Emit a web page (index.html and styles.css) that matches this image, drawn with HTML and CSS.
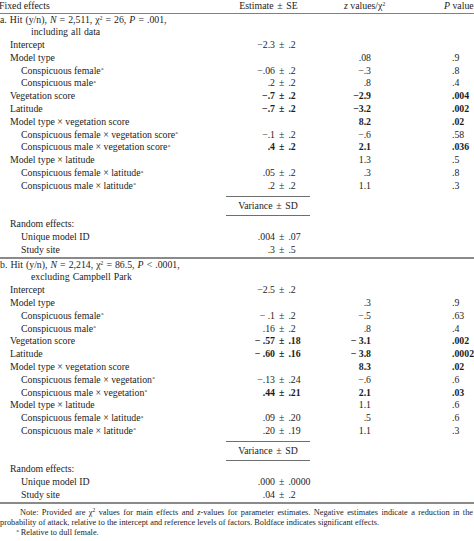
FILE: index.html
```html
<!DOCTYPE html>
<html>
<head>
<meta charset="utf-8">
<link rel="stylesheet" href="styles.css">
</head>
<body>
<div class="page">
  <div class="row head">
    <div class="lab first">Fixed effects</div>
    <div class="hest">Estimate ± SE</div>
    <div class="hz"><i>z</i> values/χ<sup class="sq">2</sup></div>
    <div class="hp"><i>P</i> value</div>
  </div>

  <section class="sec">
    <div class="row title"><div class="lab hang">a. Hit (y/n), <i>N</i> = 2,511, χ<sup class="sq">2</sup> = 26, <i>P</i> = .001,<br>including all data</div></div>
    <div class="row"><div class="lab l1">Intercept</div><div class="est"><span class="ev">−2.3</span><span class="pm">±</span><span class="se">.2</span></div><div class="z"></div><div class="p"></div></div>
    <div class="row"><div class="lab l1">Model type</div><div class="est"></div><div class="z">.08</div><div class="p">.9</div></div>
    <div class="row"><div class="lab l2">Conspicuous female<sup class="fa">a</sup></div><div class="est"><span class="ev">−.06</span><span class="pm">±</span><span class="se">.2</span></div><div class="z">−.3</div><div class="p">.8</div></div>
    <div class="row"><div class="lab l2">Conspicuous male<sup class="fa">a</sup></div><div class="est"><span class="ev">.2</span><span class="pm">±</span><span class="se">.2</span></div><div class="z">.8</div><div class="p">.4</div></div>
    <div class="row"><div class="lab l1">Vegetation score</div><div class="est b"><span class="ev">−.7</span><span class="pm">±</span><span class="se">.2</span></div><div class="z b">−2.9</div><div class="p b">.004</div></div>
    <div class="row"><div class="lab l1">Latitude</div><div class="est b"><span class="ev">−.7</span><span class="pm">±</span><span class="se">.2</span></div><div class="z b">−3.2</div><div class="p b">.002</div></div>
    <div class="row"><div class="lab l1">Model type × vegetation score</div><div class="est"></div><div class="z b">8.2</div><div class="p b">.02</div></div>
    <div class="row"><div class="lab l2">Conspicuous female × vegetation score<sup class="fa">a</sup></div><div class="est"><span class="ev">−.1</span><span class="pm">±</span><span class="se">.2</span></div><div class="z">−.6</div><div class="p">.58</div></div>
    <div class="row"><div class="lab l2">Conspicuous male × vegetation score<sup class="fa">a</sup></div><div class="est b"><span class="ev">.4</span><span class="pm">±</span><span class="se">.2</span></div><div class="z b">2.1</div><div class="p b">.036</div></div>
    <div class="row"><div class="lab l1">Model type × latitude</div><div class="est"></div><div class="z">1.3</div><div class="p">.5</div></div>
    <div class="row"><div class="lab l2">Conspicuous female × latitude<sup class="fa">a</sup></div><div class="est"><span class="ev">.05</span><span class="pm">±</span><span class="se">.2</span></div><div class="z">.3</div><div class="p">.8</div></div>
    <div class="row"><div class="lab l2">Conspicuous male × latitude<sup class="fa">a</sup></div><div class="est"><span class="ev">.2</span><span class="pm">±</span><span class="se">.2</span></div><div class="z">1.1</div><div class="p">.3</div></div>
    <div class="row var"><div class="lab"></div><div class="vcell">Variance ± SD</div></div>
    <div class="row"><div class="lab l1">Random effects:</div></div>
    <div class="row"><div class="lab l2">Unique model ID</div><div class="est"><span class="ev">.004</span><span class="pm">±</span><span class="se">.07</span></div></div>
    <div class="row"><div class="lab l2">Study site</div><div class="est"><span class="ev">.3</span><span class="pm">±</span><span class="se">.5</span></div></div>
  </section>

  <section class="sec">
    <div class="row title"><div class="lab hang">b. Hit (y/n), <i>N</i> = 2,214, χ<sup class="sq">2</sup> = 86.5, <i>P</i> &lt; .0001,<br>excluding Campbell Park</div></div>
    <div class="row"><div class="lab l1">Intercept</div><div class="est"><span class="ev">−2.5</span><span class="pm">±</span><span class="se">.2</span></div><div class="z"></div><div class="p"></div></div>
    <div class="row"><div class="lab l1">Model type</div><div class="est"></div><div class="z">.3</div><div class="p">.9</div></div>
    <div class="row"><div class="lab l2">Conspicuous female<sup class="fa">a</sup></div><div class="est"><span class="ev">− .1</span><span class="pm">±</span><span class="se">.2</span></div><div class="z">−.5</div><div class="p">.63</div></div>
    <div class="row"><div class="lab l2">Conspicuous male<sup class="fa">a</sup></div><div class="est"><span class="ev">.16</span><span class="pm">±</span><span class="se">.2</span></div><div class="z">.8</div><div class="p">.4</div></div>
    <div class="row"><div class="lab l1">Vegetation score</div><div class="est b"><span class="ev">− .57</span><span class="pm">±</span><span class="se">.18</span></div><div class="z b">− 3.1</div><div class="p b">.002</div></div>
    <div class="row"><div class="lab l1">Latitude</div><div class="est b"><span class="ev">− .60</span><span class="pm">±</span><span class="se">.16</span></div><div class="z b">− 3.8</div><div class="p b">.0002</div></div>
    <div class="row"><div class="lab l1">Model type × vegetation score</div><div class="est"></div><div class="z b">8.3</div><div class="p b">.02</div></div>
    <div class="row"><div class="lab l2">Conspicuous female × vegetation<sup class="fa">a</sup></div><div class="est"><span class="ev">−.13</span><span class="pm">±</span><span class="se">.24</span></div><div class="z">−.6</div><div class="p">.6</div></div>
    <div class="row"><div class="lab l2">Conspicuous male × vegetation<sup class="fa">a</sup></div><div class="est b"><span class="ev">.44</span><span class="pm">±</span><span class="se">.21</span></div><div class="z b">2.1</div><div class="p b">.03</div></div>
    <div class="row"><div class="lab l1">Model type × latitude</div><div class="est"></div><div class="z">1.1</div><div class="p">.6</div></div>
    <div class="row"><div class="lab l2">Conspicuous female × latitude<sup class="fa">a</sup></div><div class="est"><span class="ev">.09</span><span class="pm">±</span><span class="se">.20</span></div><div class="z">.5</div><div class="p">.6</div></div>
    <div class="row"><div class="lab l2">Conspicuous male × latitude<sup class="fa">a</sup></div><div class="est"><span class="ev">.20</span><span class="pm">±</span><span class="se">.19</span></div><div class="z">1.1</div><div class="p">.3</div></div>
    <div class="row var"><div class="lab"></div><div class="vcell">Variance ± SD</div></div>
    <div class="row"><div class="lab l1">Random effects:</div></div>
    <div class="row"><div class="lab l2">Unique model ID</div><div class="est"><span class="ev">.000</span><span class="pm">±</span><span class="se">.0000</span></div></div>
    <div class="row"><div class="lab l2">Study site</div><div class="est"><span class="ev">.04</span><span class="pm">±</span><span class="se">.2</span></div></div>
  </section>

  <div class="notes">
    <div class="n1">Note: Provided are χ<sup class="sq">2</sup> values for main effects and <i>z</i>-values for parameter estimates. Negative estimates indicate a reduction in the</div>
    <div class="n2">probability of attack, relative to the intercept and reference levels of factors. Boldface indicates significant effects.</div>
    <div class="n3"><sup class="fa">a</sup> Relative to dull female.</div>
  </div>
</div>
</body>
</html>
```

FILE: styles.css
```css
html, body {
  margin: 0;
  padding: 0;
  background: #ffffff;
}

body {
  color: #1c1c1c;
  font-family: "Liberation Serif", "Times New Roman", serif;
  font-size: 9.8px;
}

.page {
  width: 474px;
  overflow: hidden;
}

.row {
  display: grid;
  grid-template-columns: 226px 84px 134px 30px;
  height: 12.8px;
  line-height: 12.8px;
  white-space: nowrap;
}

.head {
  height: 12.5px;
  line-height: 11px;
  border-bottom: 1.3px solid #808080;
}

.first {
  margin-left: -1px;
}

.hest {
  text-align: center;
  word-spacing: 1.2px;
  padding-left: 1px;
}

.hz {
  padding-left: 34px;
}

.hp {
  padding-left: 0;
}

.sec {
  border-bottom: 2px solid #8a8a8a;
}

.title {
  height: 25.6px;
}

.hang {
  padding-left: 31px;
  text-indent: -31px;
  word-spacing: 0.6px;
}

.l1 {
  padding-left: 10px;
}

.l2 {
  padding-left: 21px;
}

.est {
  display: grid;
  grid-template-columns: 53px auto 1fr;
}

.ev {
  text-align: right;
  padding-right: 4px;
}

.se {
  padding-left: 4px;
}

.z {
  text-align: right;
  padding-right: 73px;
}

.p {
  padding-left: 8px;
}

.b {
  font-weight: bold;
}

.var {
  height: auto;
  margin: 3.5px 0 2px;
}

.vcell {
  border-top: 1px solid #6e6e6e;
  border-bottom: 1px solid #6e6e6e;
  height: 18px;
  line-height: 18px;
  text-align: center;
  word-spacing: 1.2px;
}

.sq {
  font-size: 5.5px;
  vertical-align: 3.5px;
  line-height: 0;
}

.fa {
  font-size: 5px;
  vertical-align: 3.5px;
  line-height: 0;
  margin-left: 0.5px;
}

.notes {
  margin-top: 4px;
  font-size: 8.3px;
  line-height: 10.3px;
  white-space: nowrap;
}

.n1 {
  padding-left: 20px;
  text-align: justify;
  text-align-last: justify;
  white-space: normal;
  width: 453px;
}

.n3 {
  padding-left: 16px;
}
```
